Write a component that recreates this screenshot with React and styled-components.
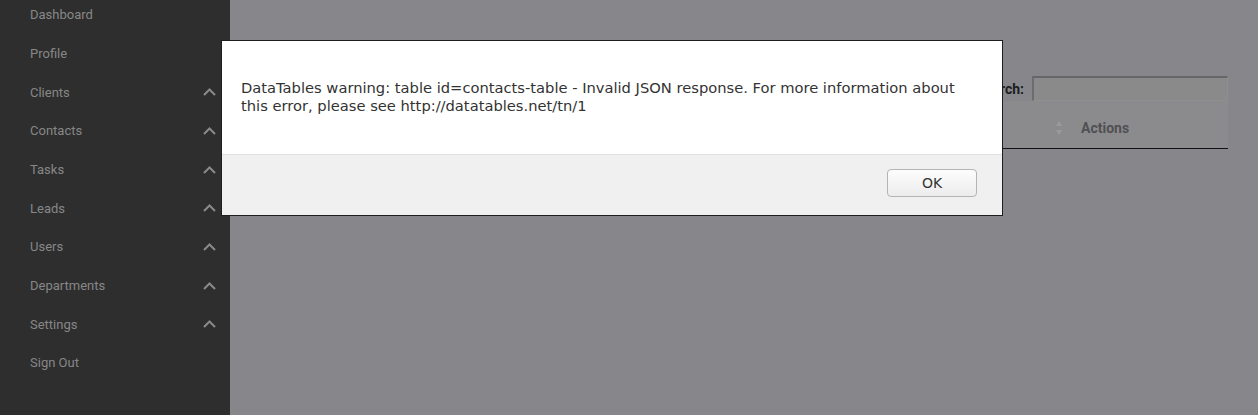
import React from 'react';
import styled, { createGlobalStyle } from 'styled-components';

const GlobalStyle = createGlobalStyle`
  html, body {
    margin: 0;
    padding: 0;
    height: 100%;
    overflow: hidden;
  }
  #root {
    height: 100%;
  }
`;

const Page = styled.div`
  position: relative;
  display: flex;
  width: 1258px;
  height: 415px;
  overflow: hidden;
  font-family: Roboto, "Liberation Sans", sans-serif;
`;

const Sidebar = styled.nav`
  width: 230px;
  flex-shrink: 0;
  background: #2e2e2e;
  display: flex;
  flex-direction: column;
  margin-top: -4.6px;
`;

const NavItem = styled.div`
  height: 38.7px;
  display: flex;
  align-items: center;
  justify-content: space-between;
  padding: 0 14px 0 30px;
  color: #878787;
  font-size: 13px;
  flex-shrink: 0;
`;

const Main = styled.main`
  flex: 1;
  background: #87878b;
  display: flex;
  flex-direction: column;
  padding: 76px 30px 0 0;
`;

const Toolbar = styled.div`
  display: flex;
  justify-content: flex-end;
  align-items: center;
  gap: 8px;
`;

const SearchLabel = styled.label`
  font-weight: 700;
  font-size: 14px;
  color: #1c1c1e;
`;

const SearchInput = styled.div`
  width: 193px;
  height: 22px;
  background: #8a8a8b;
  border-top: 2px solid #666668;
  border-left: 2px solid #6c6c6e;
  border-right: 1px solid #8e8e90;
  border-bottom: 1px solid #8e8e90;
`;

const HeaderRow = styled.div`
  height: 48px;
  padding-top: 6px;
  box-sizing: border-box;
  display: flex;
  justify-content: flex-end;
  align-items: center;
  border-bottom: 1px solid #111;
  background: #8b8b8e;
`;

const SortIcon = styled.svg`
  margin-right: 9px;
`;

const HeaderCell = styled.div`
  width: 147px;
  padding-left: 9px;
  font-weight: 700;
  font-size: 14px;
  color: #505052;
`;

const Dialog = styled.div`
  position: absolute;
  left: 221px;
  top: 40px;
  width: 780px;
  height: 174px;
  border: 1px solid #1e1e1e;
  background: #fff;
  display: flex;
  flex-direction: column;
  font-family: "DejaVu Sans", sans-serif;
`;

const DialogBody = styled.div`
  height: 113px;
  padding: 38px 40px 0 19px;
  box-sizing: border-box;
  font-size: 14.7px;
  line-height: 18px;
  color: #333;
`;

const DialogFooter = styled.div`
  flex: 1;
  background: #f0f0f0;
  border-top: 1px solid #dfdfdf;
  display: flex;
  justify-content: flex-end;
  align-items: flex-start;
  padding: 14px 25px 0 0;
`;

const OkButton = styled.button`
  width: 90px;
  height: 28px;
  border: 1px solid #b4b4b4;
  border-radius: 4px;
  background: linear-gradient(#fdfdfd, #ececec);
  font-family: "DejaVu Sans", sans-serif;
  font-size: 14px;
  color: #333;
  padding: 0;
`;

const Chevron = () => (
  <svg width="13" height="8" viewBox="0 0 13 8">
    <path d="M1 7 L6.5 1.5 L12 7" fill="none" stroke="#8a8a8a" strokeWidth="2" />
  </svg>
);

const navItems = [
  { label: 'Dashboard' },
  { label: 'Profile' },
  { label: 'Clients', sub: true },
  { label: 'Contacts', sub: true },
  { label: 'Tasks', sub: true },
  { label: 'Leads', sub: true },
  { label: 'Users', sub: true },
  { label: 'Departments', sub: true },
  { label: 'Settings', sub: true },
  { label: 'Sign Out' },
];

const App = () => (
  <Page>
    <GlobalStyle />
    <Sidebar>
      {navItems.map((item) => (
        <NavItem key={item.label}>
          <span>{item.label}</span>
          {item.sub && <Chevron />}
        </NavItem>
      ))}
    </Sidebar>
    <Main>
      <Toolbar>
        <SearchLabel>Search:</SearchLabel>
        <SearchInput />
      </Toolbar>
      <HeaderRow>
        <SortIcon width="8" height="16" viewBox="0 0 8 16">
          <path d="M4 1 L7 6 L1 6 Z" fill="#9a9a9c" />
          <path d="M4 15 L7 10 L1 10 Z" fill="#9a9a9c" />
        </SortIcon>
        <HeaderCell>Actions</HeaderCell>
      </HeaderRow>
    </Main>
    <Dialog role="alertdialog">
      <DialogBody>
        DataTables warning: table id=contacts-table - Invalid JSON response. For more information about
        this error, please see http://datatables.net/tn/1
      </DialogBody>
      <DialogFooter>
        <OkButton>OK</OkButton>
      </DialogFooter>
    </Dialog>
  </Page>
);

export default App;
